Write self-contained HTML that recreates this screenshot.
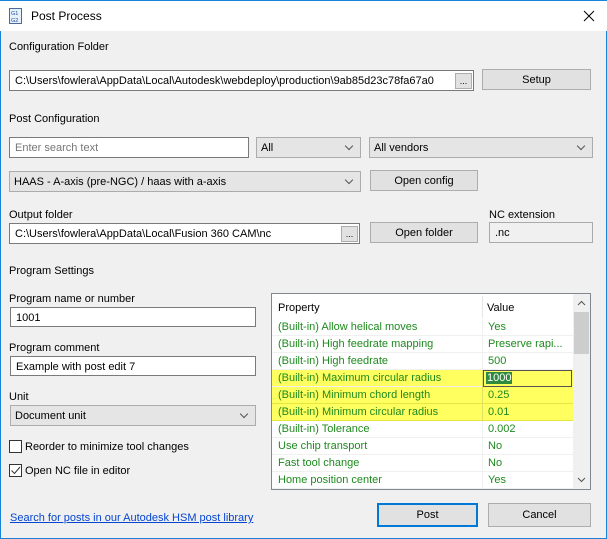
<!DOCTYPE html>
<html><head><meta charset="utf-8"><style>
*{box-sizing:border-box;margin:0;padding:0}
body{width:607px;height:539px;overflow:hidden;background:#f0f0f0;font-family:"Liberation Sans",sans-serif;font-size:11px;color:#000;position:relative}
.a{position:absolute;white-space:nowrap}
.win{position:absolute;left:0;top:0;width:607px;height:539px;border:1px solid #1883d7;border-top:none}
.title{position:absolute;left:0;top:0;width:607px;height:31px;background:#fff;border-top:1px solid #1883d7}
.inp{position:absolute;background:#fff;border:1px solid #7a7a7a;padding:1px 5px 0;line-height:18px;overflow:hidden;white-space:nowrap}
.btn{position:absolute;background:#e1e1e1;border:1px solid #adadad;text-align:center;line-height:18px;padding-top:1px}
.cmb{position:absolute;background:#e5e5e5;border:1px solid #acacac;padding:1px 4px 0;line-height:18px;white-space:nowrap}
.cmb:after{content:"";position:absolute;right:8px;top:5px;width:5px;height:5px;border-right:1px solid #555;border-bottom:1px solid #555;transform:rotate(45deg)}
.dots{position:absolute;background:#e1e1e1;border:1px solid #adadad;font-size:9px;text-align:center;line-height:14px}
.grid{position:absolute;left:271px;top:293px;width:320px;height:197px;background:#fff;border:1px solid #828790;overflow:hidden}
.row{position:absolute;left:0;width:301px;height:17px;border-bottom:1px solid #f0f0f0;color:#1e8a1e;line-height:17px}
.row span{position:absolute;left:6px}
.row b{font-weight:normal;position:absolute;left:216px}
.row i{position:absolute;left:210px;top:0;width:1px;height:17px;background:#f0f0f0}
.hl{background:#ffff60}
.chk{position:absolute;width:13px;height:13px;background:#fff;border:1px solid #333}
</style></head><body>
<div class="win"></div>
<div class="title">
 <svg class="a" style="left:9px;top:7px" width="13" height="16" viewBox="0 0 13 16"><rect x="0.5" y="0.5" width="12" height="15" fill="#e8f0fa" stroke="#4a6a9a"/><text x="2" y="7" font-size="5.5" fill="#1a4fa0" font-family="Liberation Sans">G1</text><text x="2" y="14" font-size="5.5" fill="#1a4fa0" font-family="Liberation Sans">G2</text></svg>
 <div class="a" style="left:31px;top:8px;font-size:12px">Post Process</div>
 <svg class="a" style="left:583px;top:9px" width="12" height="12"><path d="M1 1L11 11M11 1L1 11" stroke="#000" stroke-width="1"/></svg>
</div>
<div class="a" style="left:9px;top:41px">Configuration Folder</div>
<div class="inp" style="left:9px;top:70px;width:465px;height:21px;padding-right:24px">C:\Users\fowlera\AppData\Local\Autodesk\webdeploy\production\9ab85d23c78fa67a0</div>
<div class="dots" style="left:455px;top:73px;width:17px;height:16px">...</div>
<div class="btn" style="left:482px;top:69px;width:109px;height:21px">Setup</div>

<div class="a" style="left:9px;top:113px">Post Configuration</div>
<div class="inp" style="left:9px;top:137px;width:240px;height:21px;color:#777">Enter search text</div>
<div class="cmb" style="left:256px;top:137px;width:105px;height:21px">All</div>
<div class="cmb" style="left:369px;top:137px;width:224px;height:21px">All vendors</div>
<div class="cmb" style="left:9px;top:171px;width:352px;height:21px">HAAS - A-axis (pre-NGC) / haas with a-axis</div>
<div class="btn" style="left:370px;top:170px;width:108px;height:21px">Open config</div>

<div class="a" style="left:9px;top:209px">Output folder</div>
<div class="inp" style="left:9px;top:223px;width:351px;height:21px">C:\Users\fowlera\AppData\Local\Fusion 360 CAM\nc</div>
<div class="dots" style="left:341px;top:226px;width:17px;height:16px">...</div>
<div class="btn" style="left:370px;top:222px;width:108px;height:21px">Open folder</div>
<div class="a" style="left:489px;top:209px">NC extension</div>
<div class="inp" style="left:489px;top:222px;width:104px;height:21px;background:#f0f0f0;border-color:#aaa">.nc</div>

<div class="a" style="left:9px;top:265px">Program Settings</div>
<div class="a" style="left:9px;top:293px">Program name or number</div>
<div class="inp" style="left:10px;top:307px;width:246px;height:20px">1001</div>
<div class="a" style="left:9px;top:342px">Program comment</div>
<div class="inp" style="left:10px;top:356px;width:246px;height:20px">Example with post edit 7</div>
<div class="a" style="left:9px;top:391px">Unit</div>
<div class="cmb" style="left:10px;top:405px;width:246px;height:21px">Document unit</div>
<div class="chk" style="left:9px;top:440px"></div>
<div class="a" style="left:25px;top:441px">Reorder to minimize tool changes</div>
<div class="chk" style="left:9px;top:464px"><svg width="11" height="11" style="position:absolute;left:0;top:0"><path d="M1.5 5.5L4.5 8.5L10 2" stroke="#333" fill="none" stroke-width="1"/></svg></div>
<div class="a" style="left:25px;top:465px">Open NC file in editor</div>
<div class="a" style="left:10px;top:512px;color:#0645d2;text-decoration:underline">Search for posts in our Autodesk HSM post library</div>

<div class="grid">
 <div class="a" style="left:6px;top:8px">Property</div>
 <div class="a" style="left:210px;top:2px;width:1px;height:22px;background:#e5e5e5"></div>
 <div class="a" style="left:215px;top:8px">Value</div>
 <div class="row" style="top:25px"><span>(Built-in) Allow helical moves</span><i></i><b>Yes</b></div>
 <div class="row" style="top:42px"><span>(Built-in) High feedrate mapping</span><i></i><b>Preserve rapi...</b></div>
 <div class="row" style="top:59px"><span>(Built-in) High feedrate</span><i></i><b>500</b></div>
 <div class="row hl" style="top:76px;width:305px"><span>(Built-in) Maximum circular radius</span><i style="background:#e0e060"></i><b style="left:211px;top:0px;width:89px;height:17px;border:1px solid #555;background:#ffff60;line-height:15px"><em style="font-style:normal;background:#2f8a3e;color:#fff;padding:0 1px;margin-left:2px">1000</em></b></div>
 <div class="row hl" style="top:93px;width:305px;border-bottom-color:#e6e640"><span>(Built-in) Minimum chord length</span><i style="background:#e0e060"></i><b>0.25</b></div>
 <div class="row hl" style="top:110px;width:305px;border-bottom-color:#e6e640"><span>(Built-in) Minimum circular radius</span><i style="background:#e0e060"></i><b>0.01</b></div>
 <div class="row" style="top:127px"><span>(Built-in) Tolerance</span><i></i><b>0.002</b></div>
 <div class="row" style="top:144px"><span>Use chip transport</span><i></i><b>No</b></div>
 <div class="row" style="top:161px"><span>Fast tool change</span><i></i><b>No</b></div>
 <div class="row" style="top:178px"><span>Home position center</span><i></i><b>Yes</b></div>
 <div class="a" style="left:301px;top:0;width:17px;height:195px;background:#f0f0f0"></div>
 <div class="a" style="left:302px;top:18px;width:15px;height:42px;background:#cdcdcd"></div>
 <svg class="a" style="left:305px;top:6px" width="9" height="6"><path d="M1 5L4.5 1.5L8 5" stroke="#555" fill="none"/></svg>
 <svg class="a" style="left:305px;top:183px" width="9" height="6"><path d="M1 1L4.5 4.5L8 1" stroke="#555" fill="none"/></svg>
</div>

<div class="btn" style="left:377px;top:503px;width:101px;height:24px;border:2px solid #0078d7;line-height:19px">Post</div>
<div class="btn" style="left:488px;top:503px;width:103px;height:24px;line-height:20px">Cancel</div>
</body></html>
